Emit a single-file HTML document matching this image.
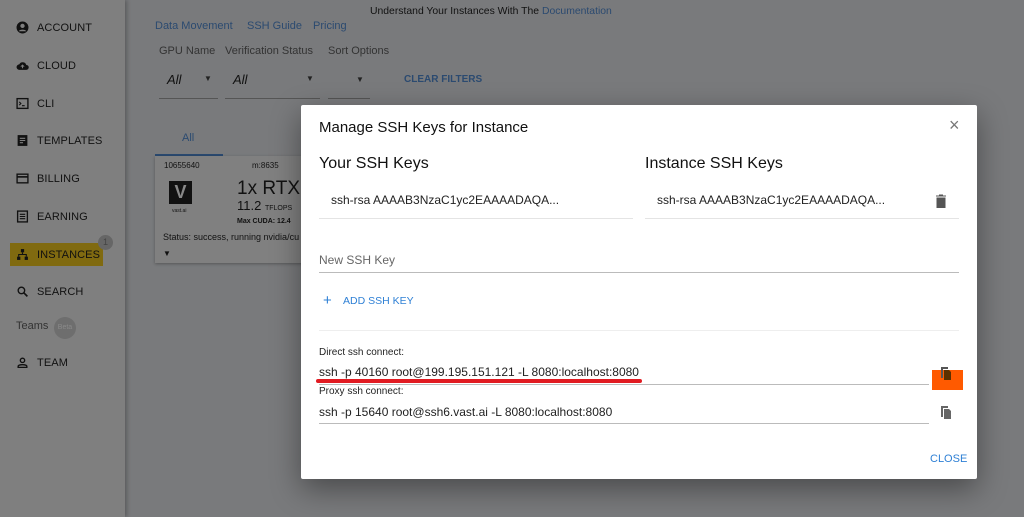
<!DOCTYPE html>
<html><head><meta charset="utf-8"><style>
*{box-sizing:border-box;margin:0;padding:0}
body{width:1024px;height:517px;overflow:hidden;background:#797a7c;font-family:"Liberation Sans",sans-serif;position:relative;color:#111}
.side{position:absolute;left:0;top:0;width:125px;height:517px;background:#7f7f7f;box-shadow:2px 0 4px rgba(0,0,0,.25)}
.nav{position:absolute;left:16px;font-size:11px;color:#111;display:flex;align-items:center;gap:8px;letter-spacing:.1px}
.ic{width:13px;height:13px;display:inline-block}
.a{position:absolute;font-size:11px}
.blue{color:#2b4a70}
.modal{position:absolute;left:301px;top:105px;width:676px;height:374px;background:#fff;border-radius:2px;box-shadow:0 10px 30px rgba(0,0,0,.4)}
.m{position:absolute;font-size:12px;color:#222}
.line{position:absolute;height:1px;background:#e4e4e4}
</style></head><body>
<div class="side">
<div class="nav" style="top:21px"><svg class="ic" viewBox="0 0 24 24"><circle cx="12" cy="12" r="11" fill="#111"/><circle cx="12" cy="9" r="4" fill="#7f7f7f"/><path d="M5 19c2-4 12-4 14 0" fill="#7f7f7f"/></svg>ACCOUNT</div>
<div class="nav" style="top:59px"><svg class="ic" viewBox="0 0 24 24"><path d="M6 20a5 5 0 010-10 7 7 0 0113 1 4.5 4.5 0 010 9z" fill="#111"/><path d="M12 10l-4 4h3v3h2v-3h3z" fill="#7f7f7f"/></svg>CLOUD</div>
<div class="nav" style="top:97px"><svg class="ic" viewBox="0 0 24 24"><rect x="2" y="3" width="20" height="18" fill="none" stroke="#111" stroke-width="2.5"/><path d="M6 9l3 3-3 3M11 16h5" stroke="#111" stroke-width="2" fill="none"/></svg>CLI</div>
<div class="nav" style="top:134px"><svg class="ic" viewBox="0 0 24 24"><rect x="3" y="2" width="18" height="20" fill="#111"/><path d="M7 8h10M7 12h10M7 16h6" stroke="#7f7f7f" stroke-width="2"/></svg>TEMPLATES</div>
<div class="nav" style="top:172px"><svg class="ic" viewBox="0 0 24 24"><rect x="2" y="4" width="20" height="16" fill="none" stroke="#111" stroke-width="2.5"/><path d="M2 9h20" stroke="#111" stroke-width="3"/></svg>BILLING</div>
<div class="nav" style="top:210px"><svg class="ic" viewBox="0 0 24 24"><rect x="3" y="2" width="18" height="20" fill="none" stroke="#111" stroke-width="2.5"/><path d="M7 8h10M7 12h10M7 16h10" stroke="#111" stroke-width="2"/></svg>EARNING</div>
<div style="position:absolute;left:10px;top:243px;width:93px;height:23px;background:#806a10"></div>
<div class="nav" style="top:248px"><svg class="ic" viewBox="0 0 24 24"><rect x="9" y="2" width="6" height="6" fill="#111"/><rect x="2" y="16" width="6" height="6" fill="#111"/><rect x="16" y="16" width="6" height="6" fill="#111"/><path d="M12 8v4M5 16v-4h14v4" stroke="#111" stroke-width="2" fill="none"/></svg>INSTANCES</div>
<div style="position:absolute;left:98px;top:235px;width:15px;height:15px;border-radius:50%;background:#666;color:#444;font-size:9px;text-align:center;line-height:15px">1</div>
<div class="nav" style="top:285px"><svg class="ic" viewBox="0 0 24 24"><circle cx="10" cy="10" r="6" fill="none" stroke="#111" stroke-width="2.5"/><path d="M14 14l7 7" stroke="#111" stroke-width="3"/></svg>SEARCH</div>
<div class="a" style="left:16px;top:320px;color:#333">Teams</div>
<div style="position:absolute;left:54px;top:317px;width:22px;height:22px;border-radius:50%;background:#6e6e6e;color:#8a8a8a;font-size:7px;text-align:center;line-height:22px">Beta</div>
<div class="nav" style="top:356px"><svg class="ic" viewBox="0 0 24 24"><circle cx="12" cy="8" r="4" fill="none" stroke="#111" stroke-width="2.5"/><path d="M4 21v-2c0-4 16-4 16 0v2z" fill="none" stroke="#111" stroke-width="2.5"/></svg>TEAM</div>
</div>
<div class="a blue" style="left:155px;top:20px">Data Movement</div>
<div class="a blue" style="left:247px;top:20px">SSH Guide</div>
<div class="a blue" style="left:313px;top:20px">Pricing</div>
<div class="a" style="left:370px;top:6px;font-size:10.4px">Understand Your Instances With The <span class="blue">Documentation</span></div>
<div class="a" style="left:159px;top:45px;color:#333">GPU Name</div>
<div class="a" style="left:225px;top:45px;color:#333">Verification Status</div>
<div class="a" style="left:328px;top:45px;color:#333">Sort Options</div>
<div class="a" style="left:167px;top:72px;font-style:italic;font-size:13px">All</div>
<div class="a" style="left:233px;top:72px;font-style:italic;font-size:13px">All</div>
<div class="a" style="left:204px;top:74px;font-size:8px;color:#222">▼</div>
<div class="a" style="left:306px;top:74px;font-size:8px;color:#222">▼</div>
<div class="a" style="left:356px;top:75px;font-size:8px;color:#222">▼</div>
<div class="line" style="left:159px;top:98px;width:59px;background:#555"></div>
<div class="line" style="left:225px;top:98px;width:95px;background:#555"></div>
<div class="line" style="left:328px;top:98px;width:42px;background:#555"></div>
<div class="a blue" style="left:404px;top:74px;font-size:10px;font-weight:bold">CLEAR FILTERS</div>
<div class="a blue" style="left:182px;top:132px">All</div>
<div style="position:absolute;left:155px;top:154px;width:68px;height:2px;background:#2b4a70"></div>
<div style="position:absolute;left:155px;top:156px;width:150px;height:107px;background:#808080;box-shadow:0 1px 3px rgba(0,0,0,.3)"></div>
<div class="a" style="left:164px;top:161px;font-size:8px">10655640</div>
<div class="a" style="left:252px;top:161px;font-size:8px">m:8635</div>
<div style="position:absolute;left:169px;top:181px;width:23px;height:23px;background:#111;color:#888;font-weight:bold;font-size:18px;text-align:center;line-height:23px">V</div>
<div class="a" style="left:172px;top:208px;font-size:5px">vast.ai</div>
<div class="a" style="left:237px;top:178px;font-size:19px">1x RTX A</div>
<div class="a" style="left:237px;top:198px;font-size:13px">11.2 <span style="font-size:7px">TFLOPS</span></div>
<div class="a" style="left:237px;top:218px;font-size:7px;font-weight:bold">Max CUDA: 12.4</div>
<div class="a" style="left:163px;top:232px;font-size:9px">Status: success, running nvidia/cu</div>
<div class="a" style="left:163px;top:249px;font-size:8px">▼</div>
<div class="modal">
<div class="m" style="left:18px;top:14px;font-size:15px;color:#111">Manage SSH Keys for Instance</div>
<div class="m" style="left:648px;top:10px;font-size:18px;color:#777">×</div>
<div class="m" style="left:18px;top:50px;font-size:16px;color:#111">Your SSH Keys</div>
<div class="m" style="left:344px;top:50px;font-size:16px;color:#111">Instance SSH Keys</div>
<div class="m" style="left:30px;top:88px">ssh-rsa AAAAB3NzaC1yc2EAAAADAQA...</div>
<div class="m" style="left:356px;top:88px">ssh-rsa AAAAB3NzaC1yc2EAAAADAQA...</div>
<svg style="position:absolute;left:634px;top:89px" width="12" height="14" viewBox="0 0 12 14"><path d="M1 2h10M4 1h4M2 4h8v10H2z" fill="#555" stroke="#555"/></svg>
<div class="line" style="left:18px;top:113px;width:314px"></div>
<div class="line" style="left:344px;top:113px;width:314px"></div>
<div class="m" style="left:18px;top:148px;color:#666">New SSH Key</div>
<div class="line" style="left:18px;top:167px;width:640px;background:#bbb"></div>
<div class="m" style="left:22px;top:187px;font-size:15px;color:#2f80d5">+</div>
<div class="m" style="left:42px;top:190px;font-size:10.5px;color:#2f80d5">ADD SSH KEY</div>
<div class="line" style="left:18px;top:225px;width:640px;background:#eee"></div>
<div class="m" style="left:18px;top:242px;font-size:10px">Direct ssh connect:</div>
<div class="m" style="left:18px;top:260px">ssh -p 40160 root@199.195.151.121 -L 8080:localhost:8080</div>
<div class="line" style="left:18px;top:279px;width:610px;background:#bbb"></div>
<div style="position:absolute;left:15px;top:274px;width:326px;height:4px;border-radius:2px;background:#e11b22"></div>
<div style="position:absolute;left:631px;top:265px;width:31px;height:20px;background:#ff5a00"></div>
<svg style="position:absolute;left:639px;top:261px" width="12" height="14" viewBox="0 0 12 14"><path d="M1 1h7v2H3v9H1z" fill="#555"/><path d="M4 4h5l2 2v8H4z" fill="#5a3000"/></svg>
<div class="m" style="left:18px;top:281px;font-size:10px">Proxy ssh connect:</div>
<div class="m" style="left:18px;top:300px">ssh -p 15640 root@ssh6.vast.ai -L 8080:localhost:8080</div>
<div class="line" style="left:18px;top:318px;width:610px;background:#bbb"></div>
<svg style="position:absolute;left:639px;top:300px" width="12" height="14" viewBox="0 0 12 14"><path d="M1 1h7v2H3v9H1z" fill="#666"/><path d="M4 4h5l2 2v8H4z" fill="#666"/></svg>
<div class="m" style="left:629px;top:348px;font-size:11px;color:#2f80d5">CLOSE</div>
</div>
</body></html>
